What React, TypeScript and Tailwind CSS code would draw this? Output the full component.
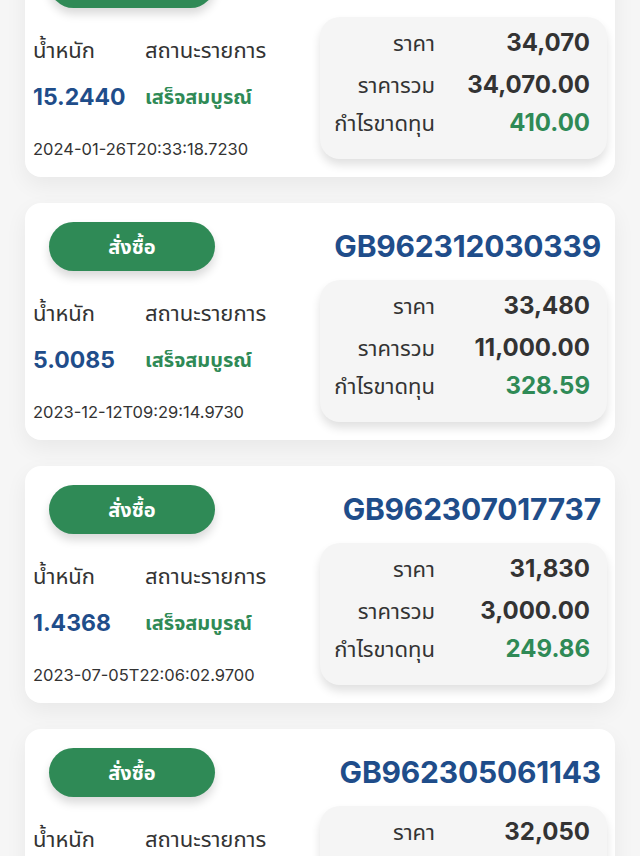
const orders = [
  { id: "GB962401260001", weight: "15.2440", price: "34,070", total: "34,070.00", profit: "410.00", date: "2024-01-26T20:33:18.7230" },
  { id: "GB962312030339", weight: "5.0085", price: "33,480", total: "11,000.00", profit: "328.59", date: "2023-12-12T09:29:14.9730" },
  { id: "GB962307017737", weight: "1.4368", price: "31,830", total: "3,000.00", profit: "249.86", date: "2023-07-05T22:06:02.9700" },
  { id: "GB962305061143", weight: "2.1000", price: "32,050", total: "6,000.00", profit: "180.00", date: "2023-05-06T10:12:40.1200" },
];

const font = { fontFamily: 'Inter, "Noto Sans", "Noto Sans Thai", sans-serif' };

function OrderCard({ o, first }: { o: (typeof orders)[number]; first?: boolean }) {
  return (
    <div
      className={`rounded-[16px] bg-white px-[8px] pt-[19px] pb-[18px] shadow-[0_8px_22px_rgba(0,0,0,0.06)] ${first ? "-mt-[60px]" : ""}`}
    >
      <div className="flex h-[49px] items-center justify-between">
        <button className="ml-[16px] flex h-[49px] w-[166px] items-center justify-center rounded-full bg-[#2f8a56] text-[20px] font-bold text-white shadow-[0_6px_10px_rgba(0,0,0,0.15)]">
          สั่งซื้อ
        </button>
        <div className="mr-[6px] text-[30px] font-bold tracking-[-0.2px] text-[#1f4d8a]">{o.id}</div>
      </div>

      <div className="mt-[9px] flex h-[142px]">
        <div className="flex w-[287px] flex-col">
          <div className="mt-[19px] flex h-[28px] items-center text-[22px] text-[#333]">
            <span className="w-[112px]">น้ำหนัก</span>
            <span>สถานะรายการ</span>
          </div>
          <div className="mt-[19px] flex h-[28px] items-center">
            <span className="w-[112px] text-[23px] font-bold text-[#1f4d8a]">{o.weight}</span>
            <span className="text-[20px] font-bold text-[#2f8a56]">เสร็จสมบูรณ์</span>
          </div>
          <div className="mt-[27px] h-[22px] text-[16.5px] leading-[22px] text-[#333]">{o.date}</div>
        </div>

        <div className="grid h-[142px] w-[287px] grid-cols-[115px_1fr] content-start gap-x-[6px] rounded-[20px] bg-[#f5f5f5] pt-[10px] pr-[17px] shadow-[0_6px_10px_rgba(0,0,0,0.12)]">
          <span className="flex h-[32px] items-center justify-end text-[22px] text-[#333]">ราคา</span>
          <span className="flex h-[32px] items-center justify-end text-[24px] font-bold text-[#333]">{o.price}</span>
          <span className="mt-[10px] flex h-[32px] items-center justify-end text-[22px] text-[#333]">ราคารวม</span>
          <span className="mt-[10px] flex h-[32px] items-center justify-end text-[24px] font-bold text-[#333]">{o.total}</span>
          <span className="mt-[6px] flex h-[32px] items-center justify-end text-[22px] text-[#333]">กำไรขาดทุน</span>
          <span className="mt-[6px] flex h-[32px] items-center justify-end text-[24px] font-bold text-[#2f8a56]">{o.profit}</span>
        </div>
      </div>
    </div>
  );
}

export default function App() {
  return (
    <div className="h-[856px] overflow-hidden bg-[#f6f6f6] px-[25px]" style={font}>
      <div className="flex flex-col gap-[26px]">
        {orders.map((o, i) => (
          <OrderCard key={o.id} o={o} first={i === 0} />
        ))}
      </div>
    </div>
  );
}
